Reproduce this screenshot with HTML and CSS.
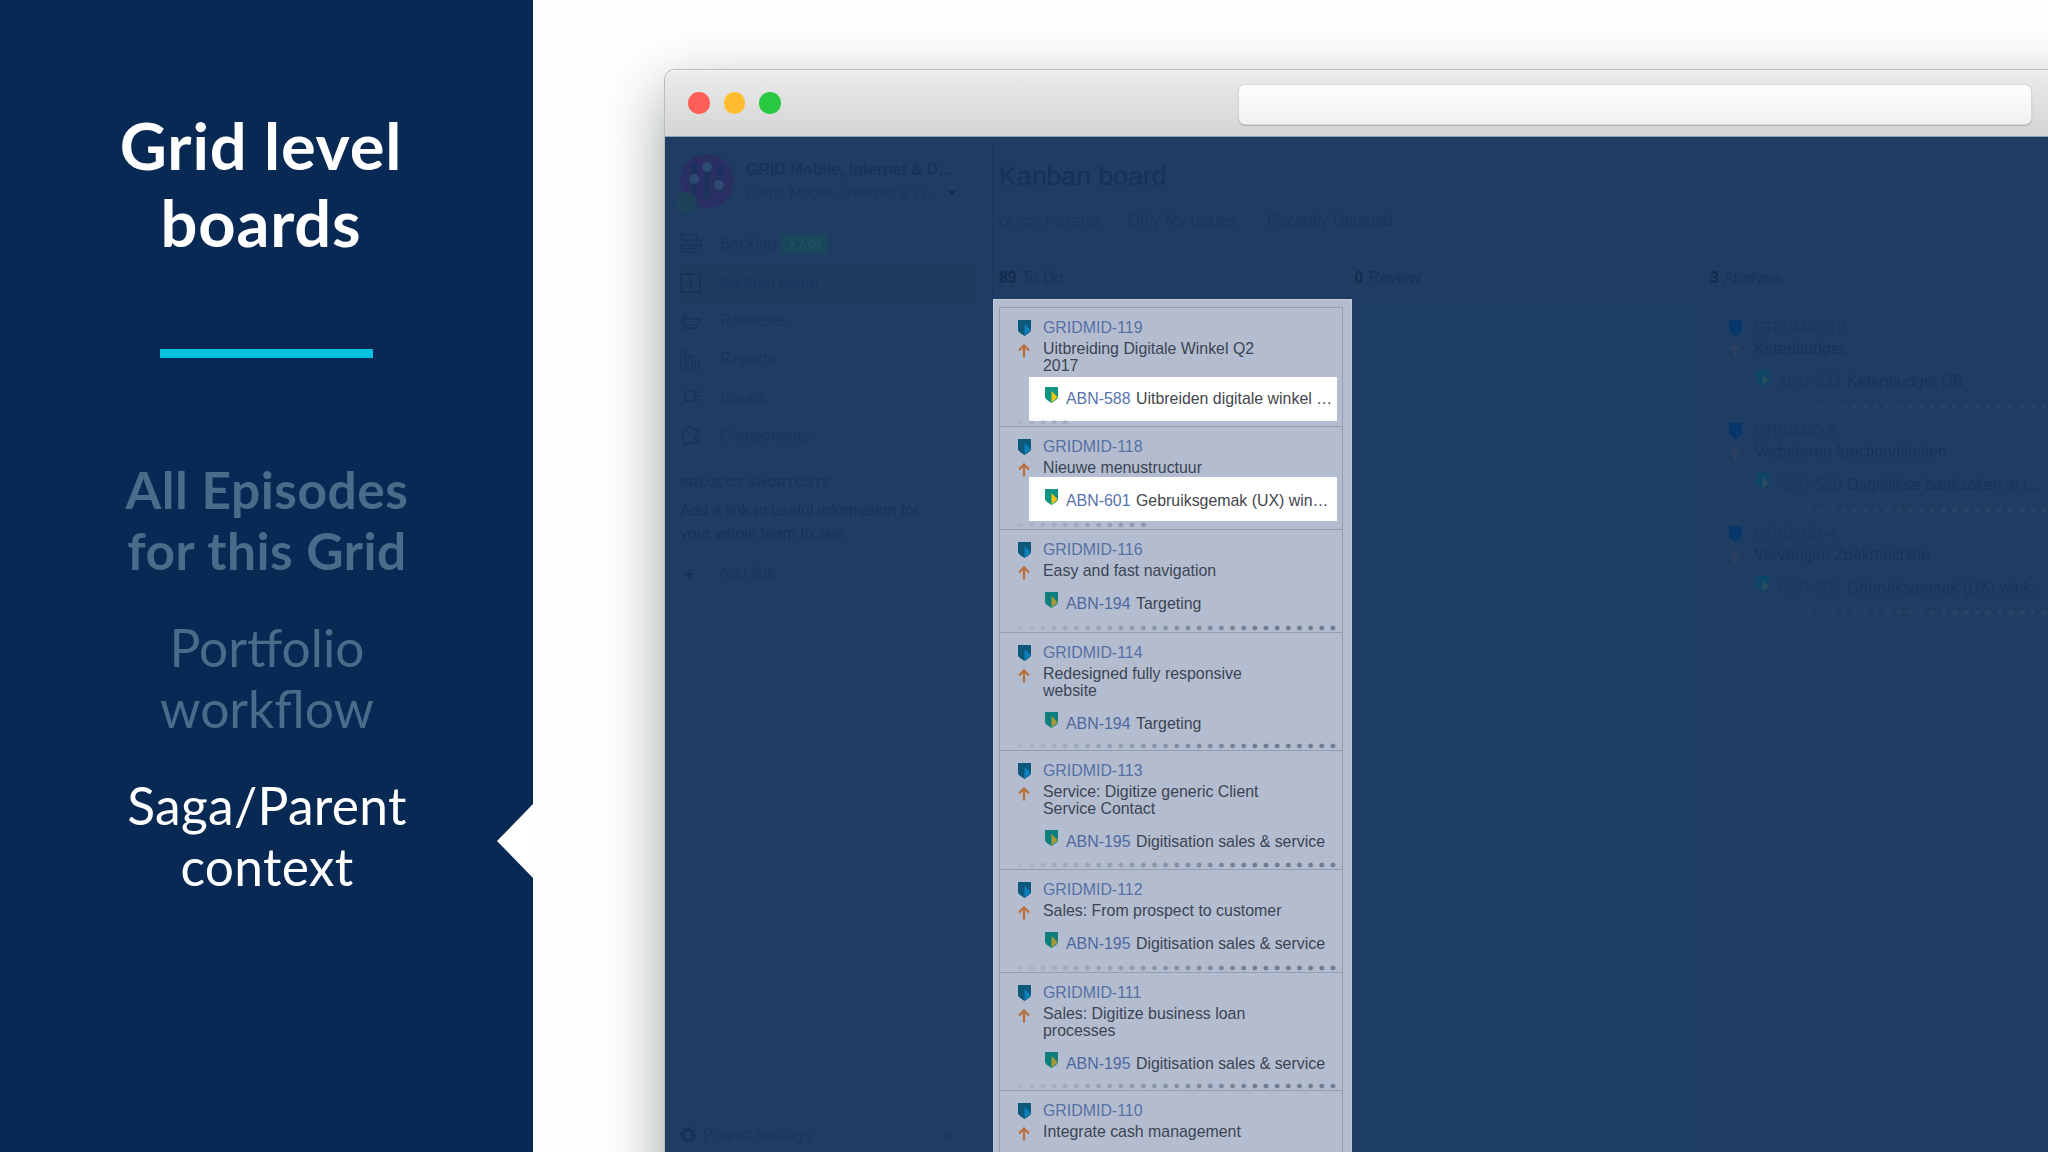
FILE: index.html
```html
<!DOCTYPE html>
<html lang="en">
<head>
    <meta charset="UTF-8">
    <meta name="viewport" content="width=device-width, initial-scale=1.0">
    <title>Grid level boards</title>
    <link rel="stylesheet" href="styles.css">
</head>
<body>
    <svg class="sprite">
        <symbol id="shield" viewBox="0 0 13 16">
            <path d="M0 0h13v10c0 2-3.500 4-6.500 6C3.500 14 0 12 0 10z"/>
            <path d="M6.500 4 12.500 10c-1.500 2.200-3.500 3.700-6 5.300z" fill="var(--side)"/>
        </symbol>
        <symbol id="arrow" viewBox="0 0 12 14">
            <path d="M6 13.500V1.500M1 6.500l5-5 5 5" fill="none" stroke="currentColor" stroke-width="2.3"/>
        </symbol>
    </svg>

    <div class="slide">
        <aside class="panel">
            <h1>Grid level<br>boards</h1>
            <div class="rule"></div>
            <ul class="topics">
                <li class="strong">All Episodes<br>for this Grid</li>
                <li>Portfolio<br>workflow</li>
                <li class="current">Saga/Parent<br>context</li>
            </ul>
            <div class="pointer"></div>
        </aside>

        <main class="stage">
            <div class="window">
                <div class="titlebar">
                    <span class="light red"></span>
                    <span class="light yellow"></span>
                    <span class="light green"></span>
                    <div class="address"></div>
                </div>

                <div class="app">
                    <nav class="sidebar">
                        <div class="project">
                            <div class="avatar">
                                <svg width="54" height="54" viewBox="0 0 54 54">
                                    <circle cx="27" cy="27" r="27" fill="#292f63"/>
                                    <path d="M14 10v36M27 12v32M40 12v26" stroke="#19335d" stroke-width="5"/>
                                    <circle cx="27" cy="13" r="5" fill="#2d4a72"/>
                                    <circle cx="14" cy="25" r="5" fill="#2d4a72"/>
                                    <circle cx="39" cy="31" r="5" fill="#2d4a72"/>
                                </svg>
                                <span class="status"></span>
                            </div>
                            <div class="project-text">
                                <div class="project-name">GRID Mobile, Internet &amp; D…</div>
                                <div class="project-board">GRID Mobile, Internet &amp; D… <i class="caret"></i></div>
                            </div>
                        </div>

                        <ul class="menu">
                            <li>
                                <svg viewBox="0 0 22 20"><path d="M1 1h16v5H1zM5 6h16v5H5zM1 11h15v7H1zM1 14.500h15"/></svg>
                                Backlog <span class="badge">+ Add</span>
                            </li>
                            <li class="selected">
                                <svg viewBox="0 0 22 20"><path d="M1 1h19v18H1zM10.500 1v18"/></svg>
                                Kanban board
                            </li>
                            <li>
                                <svg viewBox="0 0 22 20"><path d="M2 8h18l-2 6H4zM5 8V2l5 6M2 17h16"/></svg>
                                Releases
                            </li>
                            <li>
                                <svg viewBox="0 0 22 20"><path d="M1 1h4v18H1zM8 7h4v12H8zM15 12h4v7h-4z"/></svg>
                                Reports
                            </li>
                            <li>
                                <svg viewBox="0 0 22 20"><circle cx="10" cy="8" r="5.500"/><path d="M6 12l-5 5M15 4h6M16 8h5M15 12h6"/></svg>
                                Issues
                            </li>
                            <li>
                                <svg viewBox="0 0 22 20"><path d="M7 4c0-4 6-4 6 0h5v5c-4 0-4 5 0 5v4h-5c0-3-5-3-5 0H4v-5c-3 0-3-5 0-5V4z"/></svg>
                                Components
                            </li>
                        </ul>

                        <h4>PROJECT SHORTCUTS</h4>
                        <p>Add a link to useful information for<br>your whole team to see</p>
                        <div class="add-link"><span>+</span>Add link</div>

                        <div class="settings">
                            <svg width="16" height="16" viewBox="0 0 16 16"><circle cx="8" cy="8" r="5"/><circle class="teeth" cx="8" cy="8" r="7"/></svg>
                            Project settings
                            <span class="collapse">«</span>
                        </div>
                    </nav>

                    <section class="board">
                        <h2>Kanban board</h2>
                        <div class="filters">
                            <span class="filters-label">QUICK FILTERS:</span>
                            <span>Only My Issues</span>
                            <span>Recently Updated</span>
                        </div>
                        <div class="heads">
                            <div><b>89</b> To Do</div>
                            <div><b>0</b> Review</div>
                            <div><b>3</b> Analysis</div>
                        </div>

                        <div class="columns">
                            <div class="column todo">
                                <div class="card tall">
                                    <div class="key"><svg class="shield"><use href="#shield"/></svg>GRIDMID-119</div>
                                    <div class="title"><svg class="arrow"><use href="#arrow"/></svg>Uitbreiding Digitale Winkel Q2<br>2017</div>
                                    <div class="parent focus"><svg class="shield abn"><use href="#shield"/></svg><a>ABN-588</a>Uitbreiden digitale winkel …</div>
                                    <div class="dots five"></div>
                                </div>
                                <div class="card">
                                    <div class="key"><svg class="shield"><use href="#shield"/></svg>GRIDMID-118</div>
                                    <div class="title"><svg class="arrow"><use href="#arrow"/></svg>Nieuwe menustructuur</div>
                                    <div class="parent focus second"><svg class="shield abn"><use href="#shield"/></svg><a>ABN-601</a>Gebruiksgemak (UX) win…</div>
                                    <div class="dots twelve"></div>
                                </div>
                                <div class="card">
                                    <div class="key"><svg class="shield"><use href="#shield"/></svg>GRIDMID-116</div>
                                    <div class="title"><svg class="arrow"><use href="#arrow"/></svg>Easy and fast navigation</div>
                                    <div class="parent"><svg class="shield abn"><use href="#shield"/></svg><a>ABN-194</a>Targeting</div>
                                    <div class="dots"></div>
                                </div>
                                <div class="card tall">
                                    <div class="key"><svg class="shield"><use href="#shield"/></svg>GRIDMID-114</div>
                                    <div class="title"><svg class="arrow"><use href="#arrow"/></svg>Redesigned fully responsive<br>website</div>
                                    <div class="parent"><svg class="shield abn"><use href="#shield"/></svg><a>ABN-194</a>Targeting</div>
                                    <div class="dots"></div>
                                </div>
                                <div class="card tall">
                                    <div class="key"><svg class="shield"><use href="#shield"/></svg>GRIDMID-113</div>
                                    <div class="title"><svg class="arrow"><use href="#arrow"/></svg>Service: Digitize generic Client<br>Service Contact</div>
                                    <div class="parent"><svg class="shield abn"><use href="#shield"/></svg><a>ABN-195</a>Digitisation sales &amp; service</div>
                                    <div class="dots"></div>
                                </div>
                                <div class="card">
                                    <div class="key"><svg class="shield"><use href="#shield"/></svg>GRIDMID-112</div>
                                    <div class="title"><svg class="arrow"><use href="#arrow"/></svg>Sales: From prospect to customer</div>
                                    <div class="parent"><svg class="shield abn"><use href="#shield"/></svg><a>ABN-195</a>Digitisation sales &amp; service</div>
                                    <div class="dots"></div>
                                </div>
                                <div class="card tall">
                                    <div class="key"><svg class="shield"><use href="#shield"/></svg>GRIDMID-111</div>
                                    <div class="title"><svg class="arrow"><use href="#arrow"/></svg>Sales: Digitize business loan<br>processes</div>
                                    <div class="parent"><svg class="shield abn"><use href="#shield"/></svg><a>ABN-195</a>Digitisation sales &amp; service</div>
                                    <div class="dots"></div>
                                </div>
                                <div class="card">
                                    <div class="key"><svg class="shield"><use href="#shield"/></svg>GRIDMID-110</div>
                                    <div class="title"><svg class="arrow"><use href="#arrow"/></svg>Integrate cash management</div>
                                </div>
                            </div>

                            <div class="column review"></div>

                            <div class="column analysis">
                                <div class="card">
                                    <div class="key"><svg class="shield"><use href="#shield"/></svg>GRIDMID-10</div>
                                    <div class="title"><svg class="arrow"><use href="#arrow"/></svg>Ketenbudget</div>
                                    <div class="parent"><svg class="shield abn"><use href="#shield"/></svg><a>ABN-632</a>Ketenbudget DB</div>
                                    <div class="dots"></div>
                                </div>
                                <div class="card">
                                    <div class="key"><svg class="shield"><use href="#shield"/></svg>GRIDMID-9</div>
                                    <div class="title"><svg class="arrow"><use href="#arrow"/></svg>Verbeteren functionaliteiten</div>
                                    <div class="parent"><svg class="shield abn"><use href="#shield"/></svg><a>ABN-580</a>Dagelijkse bankzaken in i…</div>
                                    <div class="dots"></div>
                                </div>
                                <div class="card">
                                    <div class="key"><svg class="shield"><use href="#shield"/></svg>GRIDMID-4</div>
                                    <div class="title"><svg class="arrow"><use href="#arrow"/></svg>Vervangen Zoekmachine</div>
                                    <div class="parent"><svg class="shield abn"><use href="#shield"/></svg><a>ABN-601</a>Gebruiksgemak (UX) wink…</div>
                                    <div class="dots"></div>
                                </div>
                            </div>
                        </div>
                    </section>
                </div>
            </div>
        </main>
    </div>
</body>
</html>
```

FILE: styles.css
```css
* {
    box-sizing: border-box;
}

body {
    margin: 0;
    overflow: hidden;
    font-family: "Liberation Sans", Arial, sans-serif;
    background: #fdfffd;
}

h1, h2, h4, p, ul {
    margin: 0;
    padding: 0;
    font-weight: normal;
    list-style: none;
}

.sprite {
    display: none;
}

.slide {
    display: flex;
    width: 2048px;
    height: 1152px;
    overflow: hidden;
}

/* Left panel */
.panel {
    position: relative;
    z-index: 2;
    flex: none;
    width: 533px;
    padding-top: 107px;
    background: #082953;
    color: #fff;
    text-align: center;
    font-family: Lato, sans-serif;
}

.panel h1 {
    width: 522px;
    font-size: 65px;
    font-weight: 700;
    line-height: 77px;
    letter-spacing: 0.8px;
}

.rule {
    width: 213px;
    height: 9px;
    margin: 88px auto 0;
    background: #00c1de;
}

.topics {
    padding: 101px 0 0 1px;
    font-size: 51.5px;
    line-height: 61px;
}

.topics li {
    margin-bottom: 36px;
    color: #4b6b8b;
}

.topics .strong {
    font-weight: 700;
    letter-spacing: 0.5px;
}

.topics .current {
    color: #fff;
    letter-spacing: 0.3px;
}

.pointer {
    position: absolute;
    right: 0;
    top: 804px;
    border: solid transparent;
    border-width: 37px 36px 37px 0;
    border-right-color: #fff;
}

/* Browser window */
.stage {
    flex: 1;
    min-width: 0;
    padding: 70px 0 0 132px;
}

.window {
    width: 1700px;
    height: 1200px;
    border-radius: 10px 10px 0 0;
    box-shadow: 0 0 0 1px #b9bdb9, 0 22px 60px rgba(30, 40, 30, 0.45);
}

.titlebar {
    display: flex;
    align-items: center;
    gap: 14px;
    height: 67px;
    padding-left: 23px;
    border-radius: 10px 10px 0 0;
    border-bottom: 1px solid #8fa3b8;
    background: linear-gradient(#ececec, #d4d4d4);
    box-shadow: inset 0 1px 0 #f6f6f6;
}

.light {
    width: 21.5px;
    height: 21.5px;
    border-radius: 50%;
}

.red {
    background: #ff5f57;
}

.yellow {
    background: #ffbd2e;
}

.green {
    background: #28c840;
}

.address {
    width: 792px;
    height: 39px;
    margin: 2px 0 0 444px;
    border-radius: 6px;
    background: linear-gradient(#fff, #f0f0f2);
    box-shadow: 0 0 0 1px #d6d6d6, 0 1px 1px 1px #adadad;
}

.app {
    display: flex;
    height: 1015px;
    background: #1f3d63;
    color: #18325a;
}

/* Project sidebar */
.sidebar {
    display: flex;
    flex-direction: column;
    flex: none;
    width: 328px;
    padding: 17px 0 7px 15px;
    border-right: 1px solid #1b375d;
    font-size: 15.8px;
}

.project {
    display: flex;
    height: 71px;
}

.avatar {
    position: relative;
    width: 66px;
}

.status {
    position: absolute;
    left: -4px;
    top: 38px;
    width: 21px;
    height: 21px;
    border-radius: 50%;
    background: #1d425a;
}

.project-name {
    padding-top: 4px;
    font-size: 15.8px;
    font-weight: bold;
    line-height: 23px;
    white-space: nowrap;
}

.project-board {
    font-size: 15.5px;
    line-height: 23px;
    white-space: nowrap;
    color: #19355d;
}

.caret {
    display: inline-block;
    margin: 0 0 3px 2px;
    border: 4px solid transparent;
    border-top-color: #142d52;
    border-bottom: 0;
}

.menu li {
    display: flex;
    align-items: center;
    height: 38.4px;
    margin-right: 16px;
    color: #19355d;
}

.menu .selected {
    background: #1e3b60;
}

.menu svg {
    width: 22px;
    height: 20px;
    margin-right: 18px;
    fill: none;
    stroke: #17335a;
    stroke-width: 1.5;
}

.badge {
    width: 46px;
    height: 20px;
    margin-left: 6px;
    border-radius: 3px;
    background: #184759;
    color: #214f64;
    font-size: 12px;
    font-weight: bold;
    line-height: 20px;
    text-align: center;
}

.sidebar h4 {
    padding-top: 17px;
    font-size: 13px;
    font-weight: bold;
    line-height: 22px;
    letter-spacing: 0.3px;
    color: #19355d;
}

.sidebar p {
    padding-top: 6px;
    line-height: 22.5px;
}

.add-link {
    display: flex;
    padding-top: 18px;
    line-height: 22px;
    color: #19355d;
}

.add-link span {
    width: 39px;
    padding-left: 5px;
    font-weight: bold;
    color: #142d52;
}

.settings {
    display: flex;
    align-items: center;
    gap: 7px;
    margin-top: auto;
    line-height: 20px;
    color: #19355d;
}

.settings svg {
    fill: none;
    stroke: #16315a;
    stroke-width: 3;
}

.settings .teeth {
    stroke-width: 2;
    stroke-dasharray: 2.7 2.8;
}

.collapse {
    margin: 0 40px 0 auto;
}

/* Board */
.board {
    flex: 1;
    color: #163058;
}

.board h2 {
    padding: 24px 0 0 6px;
    font-size: 26.7px;
    line-height: 30px;
}

.filters {
    display: flex;
    align-items: baseline;
    gap: 31px;
    padding: 19px 0 0 6px;
    font-size: 15.8px;
    line-height: 22px;
    color: #19355d;
}

.filters-label {
    width: 98px;
    font-size: 13.4px;
    white-space: nowrap;
}

.heads {
    display: flex;
    padding: 35px 0 0 6px;
    font-size: 15.8px;
    line-height: 20px;
    color: #17325a;
}

.heads div {
    width: 355.500px;
}

.heads b {
    margin-right: 1px;
    color: #132b50;
}

.columns {
    display: flex;
    padding-top: 11px;
}

.column {
    flex: none;
}

.todo {
    width: 359px;
    height: 860px;
    padding: 8px 9px 0 6px;
    background: #b4bdcf;
    box-shadow: inset 1px 1px 0 #c0cadb, inset -1px 0 0 #c0cadb;
}

.review {
    width: 341px;
    height: 860px;
    margin: 5px 15px 0 3px;
    background: #1e3d64;
}

.analysis {
    width: 342px;
    padding-top: 9px;
}

.card {
    position: relative;
    height: 103px;
    padding: 10px 0 0 43px;
    font-size: 15.9px;
    white-space: nowrap;
}

.card.tall {
    height: 118.500px;
}

.todo .card {
    border: 1px solid #949eb3;
    border-bottom: 0;
    color: #3b4454;
}

.key {
    position: relative;
    line-height: 20px;
    color: #5670a5;
}

.title {
    position: relative;
    margin-top: 2px;
    line-height: 17px;
}

.parent {
    position: relative;
    z-index: 0;
    margin: 15px 0 0 23px;
    line-height: 20px;
}

.parent a {
    display: inline-block;
    width: 70px;
    color: #4d68a0;
}

/* White box behind the highlighted parent issue */
.focus::before {
    content: "";
    position: absolute;
    z-index: -1;
    left: -37px;
    top: -12px;
    width: 308px;
    height: 44px;
    background: #fff;
}

.focus.second::before {
    top: -14px;
}

.todo .focus {
    color: #43464c;
}

.todo .focus a {
    color: #5773ac;
}

.shield {
    --side: #0a80bd;
    position: absolute;
    left: -25px;
    top: 2px;
    width: 13px;
    height: 16px;
    fill: #0b587b;
}

.shield.abn {
    --side: #a89a35;
    left: -21px;
    top: -2px;
    fill: #0e7f7c;
}

.focus .shield.abn {
    --side: #f2c513;
    fill: #0d9482;
}

.arrow {
    position: absolute;
    left: -25px;
    top: 4px;
    width: 12px;
    height: 14px;
    color: #b96f3d;
}

/* Days-in-column dots */
.dots {
    position: absolute;
    left: 15px;
    bottom: 1px;
    width: 324px;
    height: 6px;
    background: radial-gradient(circle, #707b90 2px, transparent 2.8px) 0 0 / 11.17px 6px repeat-x;
    -webkit-mask-image: linear-gradient(to right, rgba(0, 0, 0, 0.1), #000 75%);
    mask-image: linear-gradient(to right, rgba(0, 0, 0, 0.1), #000 75%);
}

.dots.five {
    clip-path: inset(0 268px 0 0);
}

.dots.twelve {
    clip-path: inset(0 190px 0 0);
}

.analysis .card {
    color: #17335a;
}

.analysis .key,
.analysis .parent a {
    color: #1a375f;
}

.analysis .shield {
    --side: #06396f;
    fill: #07366a;
}

.analysis .shield.abn {
    --side: #2b4d5c;
    fill: #0d4568;
}

.analysis .arrow {
    color: #2c4260;
}

.analysis .dots {
    opacity: 0.12;
}
```
